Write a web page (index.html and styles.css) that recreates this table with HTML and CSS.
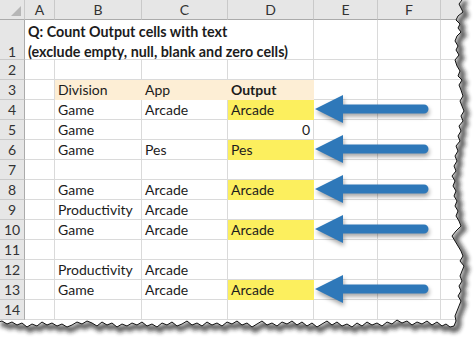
FILE: index.html
```html
<!DOCTYPE html>
<html>
<head>
<meta charset="utf-8">
<link rel="stylesheet" href="styles.css">
</head>
<body>
<div class="page">
  <div class="sheet">
    <div class="corner"><svg class="tri" width="10" height="10" viewBox="0 0 10 10"><path d="M10 0 L10 10 L0 10 Z"/></svg></div>
    <div class="ch">A</div><div class="ch">B</div><div class="ch">C</div><div class="ch">D</div><div class="ch">E</div><div class="ch">F</div><div class="ch"></div>

    <div class="rh tall">1</div>
    <div class="c title"><span>Q: Count Output cells with text</span><span>(exclude empty, null, blank and zero cells)</span></div>
    <div class="c"></div><div class="c"></div><div class="c"></div>

    <div class="rh">2</div>
    <div class="c"></div><div class="c"></div><div class="c"></div><div class="c"></div><div class="c"></div><div class="c"></div><div class="c"></div>

    <div class="rh">3</div>
    <div class="c"></div><div class="c orange">Division</div><div class="c orange">App</div><div class="c orange bold">Output</div><div class="c"></div><div class="c"></div><div class="c"></div>

    <div class="rh">4</div>
    <div class="c"></div><div class="c">Game</div><div class="c">Arcade</div><div class="c yellow">Arcade</div>
    <div class="c e"><svg class="arrow" width="130" height="36" viewBox="0 -8 130 36"><path d="M1 9 L29 -5 L29 4.5 L110 4.5 A4.5 4.5 0 0 1 110 13.5 L29 13.5 L29 23 Z"/></svg></div><div class="c"></div><div class="c"></div>

    <div class="rh">5</div>
    <div class="c"></div><div class="c">Game</div><div class="c"></div><div class="c num">0</div><div class="c"></div><div class="c"></div><div class="c"></div>

    <div class="rh">6</div>
    <div class="c"></div><div class="c">Game</div><div class="c">Pes</div><div class="c yellow">Pes</div>
    <div class="c e"><svg class="arrow" width="130" height="36" viewBox="0 -8 130 36"><path d="M1 9 L29 -5 L29 4.5 L110 4.5 A4.5 4.5 0 0 1 110 13.5 L29 13.5 L29 23 Z"/></svg></div><div class="c"></div><div class="c"></div>

    <div class="rh">7</div>
    <div class="c"></div><div class="c"></div><div class="c"></div><div class="c"></div><div class="c"></div><div class="c"></div><div class="c"></div>

    <div class="rh">8</div>
    <div class="c"></div><div class="c">Game</div><div class="c">Arcade</div><div class="c yellow">Arcade</div>
    <div class="c e"><svg class="arrow" width="130" height="36" viewBox="0 -8 130 36"><path d="M1 9 L29 -5 L29 4.5 L110 4.5 A4.5 4.5 0 0 1 110 13.5 L29 13.5 L29 23 Z"/></svg></div><div class="c"></div><div class="c"></div>

    <div class="rh">9</div>
    <div class="c"></div><div class="c">Productivity</div><div class="c">Arcade</div><div class="c"></div><div class="c"></div><div class="c"></div><div class="c"></div>

    <div class="rh">10</div>
    <div class="c"></div><div class="c">Game</div><div class="c">Arcade</div><div class="c yellow">Arcade</div>
    <div class="c e"><svg class="arrow" width="130" height="36" viewBox="0 -8 130 36"><path d="M1 9 L29 -5 L29 4.5 L110 4.5 A4.5 4.5 0 0 1 110 13.5 L29 13.5 L29 23 Z"/></svg></div><div class="c"></div><div class="c"></div>

    <div class="rh">11</div>
    <div class="c"></div><div class="c"></div><div class="c"></div><div class="c"></div><div class="c"></div><div class="c"></div><div class="c"></div>

    <div class="rh">12</div>
    <div class="c"></div><div class="c">Productivity</div><div class="c">Arcade</div><div class="c"></div><div class="c"></div><div class="c"></div><div class="c"></div>

    <div class="rh">13</div>
    <div class="c"></div><div class="c">Game</div><div class="c">Arcade</div><div class="c yellow">Arcade</div>
    <div class="c e"><svg class="arrow" width="130" height="36" viewBox="0 -8 130 36"><path d="M1 9 L29 -5 L29 4.5 L110 4.5 A4.5 4.5 0 0 1 110 13.5 L29 13.5 L29 23 Z"/></svg></div><div class="c"></div><div class="c"></div>

    <div class="rh">14</div>
    <div class="c"></div><div class="c"></div><div class="c"></div><div class="c"></div><div class="c"></div><div class="c"></div><div class="c"></div>
  </div>

  <svg class="tear" width="474" height="339" viewBox="0 0 474 339">
    <defs>
      <clipPath id="outside">
        <path d="M474 -2 L462 -2 L462 0 L459 4 L461 8 L463 12 L458 16 L456 20 L460 24 L458 28 L461 32 L457 36 L455 41 L458 46 L456 50 L459 55 L455 60 L457 66 L460 71 L458 76 L462 80 L459 85 L461 90 L463 96 L460 101 L462 106 L464 111 L461 116 L463 121 L459 126 L461 131 L458 136 L460 141 L456 146 L458 151 L455 156 L457 161 L454 166 L456 171 L452 176 L455 181 L453 186 L456 191 L454 196 L457 201 L455 206 L458 211 L456 216 L459 221 L461 226 L456 231 L452 236 L455 241 L458 246 L461 251 L463 256 L460 261 L464 266 L462 271 L460 276 L462 281 L459 286 L461 291 L458 296 L461 301 L459 306 L457 311 L455 316 L456 321 L454 326 L450 327 L446 324 L442 326 L437 322 L432 325 L427 321 L422 324 L417 322 L412 325 L407 321 L402 323 L397 320 L392 324 L387 322 L382 326 L377 323 L372 325 L367 322 L362 326 L357 323 L352 327 L347 324 L342 326 L337 322 L332 325 L327 321 L322 324 L317 327 L312 323 L307 326 L302 322 L297 325 L292 321 L287 324 L282 322 L277 326 L272 323 L267 325 L262 321 L257 324 L252 327 L247 323 L242 325 L237 321 L232 324 L227 322 L222 326 L217 323 L212 325 L207 322 L202 326 L197 323 L192 325 L187 321 L182 324 L177 326 L172 322 L167 325 L162 323 L157 327 L152 324 L147 326 L142 322 L137 325 L132 323 L127 326 L122 324 L117 327 L112 323 L107 325 L102 322 L97 326 L92 323 L87 321 L82 324 L77 322 L72 325 L67 327 L62 324 L57 326 L52 323 L47 325 L42 322 L37 326 L32 324 L27 327 L22 323 L17 325 L12 322 L7 324 L2 321 L-2 322 L-2 341 L476 341 Z"/>
      </clipPath>
      <filter id="blur" x="-10%" y="-10%" width="120%" height="120%">
        <feGaussianBlur stdDeviation="2"/>
      </filter>
    </defs>
    <rect class="outfill" x="-2" y="-2" width="480" height="345" clip-path="url(#outside)"/>
    <g clip-path="url(#outside)">
      <path class="shadow" filter="url(#blur)" transform="translate(3 3)" d="M462 -2 L462 0 L459 4 L461 8 L463 12 L458 16 L456 20 L460 24 L458 28 L461 32 L457 36 L455 41 L458 46 L456 50 L459 55 L455 60 L457 66 L460 71 L458 76 L462 80 L459 85 L461 90 L463 96 L460 101 L462 106 L464 111 L461 116 L463 121 L459 126 L461 131 L458 136 L460 141 L456 146 L458 151 L455 156 L457 161 L454 166 L456 171 L452 176 L455 181 L453 186 L456 191 L454 196 L457 201 L455 206 L458 211 L456 216 L459 221 L461 226 L456 231 L452 236 L455 241 L458 246 L461 251 L463 256 L460 261 L464 266 L462 271 L460 276 L462 281 L459 286 L461 291 L458 296 L461 301 L459 306 L457 311 L455 316 L456 321 L454 326 L450 327 L446 324 L442 326 L437 322 L432 325 L427 321 L422 324 L417 322 L412 325 L407 321 L402 323 L397 320 L392 324 L387 322 L382 326 L377 323 L372 325 L367 322 L362 326 L357 323 L352 327 L347 324 L342 326 L337 322 L332 325 L327 321 L322 324 L317 327 L312 323 L307 326 L302 322 L297 325 L292 321 L287 324 L282 322 L277 326 L272 323 L267 325 L262 321 L257 324 L252 327 L247 323 L242 325 L237 321 L232 324 L227 322 L222 326 L217 323 L212 325 L207 322 L202 326 L197 323 L192 325 L187 321 L182 324 L177 326 L172 322 L167 325 L162 323 L157 327 L152 324 L147 326 L142 322 L137 325 L132 323 L127 326 L122 324 L117 327 L112 323 L107 325 L102 322 L97 326 L92 323 L87 321 L82 324 L77 322 L72 325 L67 327 L62 324 L57 326 L52 323 L47 325 L42 322 L37 326 L32 324 L27 327 L22 323 L17 325 L12 322 L7 324 L2 321 L-2 322"/>
    </g>
    <path class="edge" d="M462 -2 L462 0 L459 4 L461 8 L463 12 L458 16 L456 20 L460 24 L458 28 L461 32 L457 36 L455 41 L458 46 L456 50 L459 55 L455 60 L457 66 L460 71 L458 76 L462 80 L459 85 L461 90 L463 96 L460 101 L462 106 L464 111 L461 116 L463 121 L459 126 L461 131 L458 136 L460 141 L456 146 L458 151 L455 156 L457 161 L454 166 L456 171 L452 176 L455 181 L453 186 L456 191 L454 196 L457 201 L455 206 L458 211 L456 216 L459 221 L461 226 L456 231 L452 236 L455 241 L458 246 L461 251 L463 256 L460 261 L464 266 L462 271 L460 276 L462 281 L459 286 L461 291 L458 296 L461 301 L459 306 L457 311 L455 316 L456 321 L454 326 L450 327 L446 324 L442 326 L437 322 L432 325 L427 321 L422 324 L417 322 L412 325 L407 321 L402 323 L397 320 L392 324 L387 322 L382 326 L377 323 L372 325 L367 322 L362 326 L357 323 L352 327 L347 324 L342 326 L337 322 L332 325 L327 321 L322 324 L317 327 L312 323 L307 326 L302 322 L297 325 L292 321 L287 324 L282 322 L277 326 L272 323 L267 325 L262 321 L257 324 L252 327 L247 323 L242 325 L237 321 L232 324 L227 322 L222 326 L217 323 L212 325 L207 322 L202 326 L197 323 L192 325 L187 321 L182 324 L177 326 L172 322 L167 325 L162 323 L157 327 L152 324 L147 326 L142 322 L137 325 L132 323 L127 326 L122 324 L117 327 L112 323 L107 325 L102 322 L97 326 L92 323 L87 321 L82 324 L77 322 L72 325 L67 327 L62 324 L57 326 L52 323 L47 325 L42 322 L37 326 L32 324 L27 327 L22 323 L17 325 L12 322 L7 324 L2 321 L-2 322"/>
  </svg>
</div>
</body>
</html>
```
FILE: styles.css
```css
html, body {
  margin: 0;
  padding: 0;
  background: #ffffff;
}

.page {
  position: relative;
  width: 474px;
  height: 339px;
  overflow: hidden;
}

.sheet {
  display: grid;
  grid-template-columns: 25px 30px 87px 86px 86px 64px 63px 33px;
  grid-template-rows: 20px 40px repeat(13, 20px);
  font-family: Lato, "Liberation Sans", sans-serif;
  font-size: 14px;
  color: #1c1c1c;
}

.sheet > div {
  box-sizing: border-box;
  min-width: 0;
}

.corner {
  background: #e6e6e6;
  border-right: 1px solid #c9c9c9;
  border-bottom: 1px solid #ababab;
  display: flex;
  align-items: flex-end;
  justify-content: flex-end;
  padding: 0 3px 3px 0;
}

.tri {
  display: block;
  fill: #b6b6b6;
}

.ch {
  background: #e6e6e6;
  border-right: 1px solid #c9c9c9;
  border-bottom: 1px solid #ababab;
  display: flex;
  align-items: center;
  justify-content: center;
  color: #333333;
}

.rh {
  background: #e6e6e6;
  border-right: 1px solid #ababab;
  border-bottom: 1px solid #c9c9c9;
  display: flex;
  align-items: center;
  justify-content: center;
  color: #333333;
}

.rh.tall {
  align-items: flex-start;
  padding-top: 22px;
  line-height: 20px;
}

.c {
  border-right: 1px solid #dadada;
  border-bottom: 1px solid #dadada;
  display: flex;
  align-items: center;
  padding: 0 3px;
  white-space: nowrap;
}

.title {
  grid-column: span 4;
  flex-direction: column;
  align-items: flex-start;
  justify-content: flex-start;
  font-weight: bold;
  font-size: 14.3px;
  line-height: 20px;
  padding-top: 2px;
}

.orange {
  background: #fdeed5;
  border-right-color: #fdeed5;
  border-bottom-color: #fdeed5;
}

.yellow {
  background: #fcef5e;
  border-right-color: #fcef5e;
  border-bottom-color: #fcef5e;
}

.bold {
  font-weight: bold;
}

.num {
  justify-content: flex-end;
}

.e {
  position: relative;
  z-index: 2;
}

.arrow {
  position: absolute;
  left: 0;
  top: -8px;
  overflow: visible;
  fill: #2e78b9;
  filter: drop-shadow(1px 3px 2px rgba(0, 0, 0, 0.35));
}

.tear {
  position: absolute;
  left: 0;
  top: 0;
  z-index: 5;
  pointer-events: none;
}

.outfill {
  fill: #ffffff;
}

.shadow {
  fill: none;
  stroke: #1a1a1a;
  stroke-width: 5;
  opacity: 0.75;
}

.edge {
  fill: none;
  stroke: #111111;
  stroke-width: 1;
}
```
